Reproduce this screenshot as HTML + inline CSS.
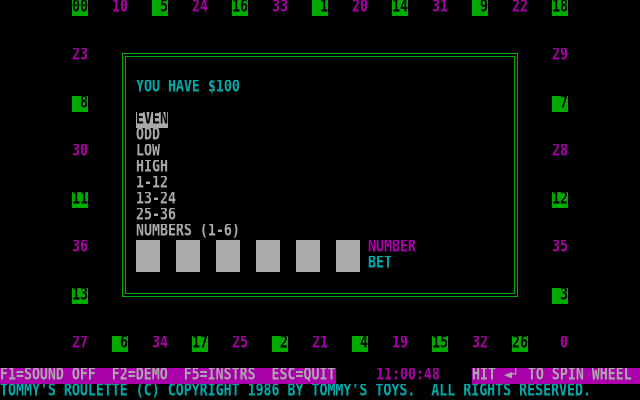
<!DOCTYPE html>
<html><head><meta charset="utf-8"><style>
html,body{margin:0;padding:0;background:#000;width:640px;height:400px;overflow:hidden;position:relative}
.t{position:absolute;height:16px;line-height:16px;font-family:"DejaVu Sans Mono","Liberation Mono",monospace;font-size:13.28px;white-space:pre;font-weight:bold;overflow:hidden}
.t i{font-style:normal;display:inline-block;transform:scaleY(1.25);transform-origin:50% 55%}
.m{color:#AA00AA}.c{color:#00AAAA}.w{color:#AAAAAA}
.g{background:#00AA00;color:#000}
.b{position:absolute;border:1px solid #00AA00}
.gb{position:absolute;background:#AAAAAA;width:24px;height:32px}
</style></head><body>
<div class="t g" style="left:72px;top:0"><i>00</i></div>
<div class="t m" style="left:112px;top:0"><i>10</i></div>
<div class="t g" style="left:152px;top:0"><i> 5</i></div>
<div class="t m" style="left:192px;top:0"><i>24</i></div>
<div class="t g" style="left:232px;top:0"><i>16</i></div>
<div class="t m" style="left:272px;top:0"><i>33</i></div>
<div class="t g" style="left:312px;top:0"><i> 1</i></div>
<div class="t m" style="left:352px;top:0"><i>20</i></div>
<div class="t g" style="left:392px;top:0"><i>14</i></div>
<div class="t m" style="left:432px;top:0"><i>31</i></div>
<div class="t g" style="left:472px;top:0"><i> 9</i></div>
<div class="t m" style="left:512px;top:0"><i>22</i></div>
<div class="t g" style="left:552px;top:0"><i>18</i></div>
<div class="t m" style="left:72px;top:48px"><i>23</i></div>
<div class="t g" style="left:72px;top:96px"><i> 8</i></div>
<div class="t m" style="left:72px;top:144px"><i>30</i></div>
<div class="t g" style="left:72px;top:192px"><i>11</i></div>
<div class="t m" style="left:72px;top:240px"><i>36</i></div>
<div class="t g" style="left:72px;top:288px"><i>13</i></div>
<div class="t m" style="left:552px;top:48px"><i>29</i></div>
<div class="t g" style="left:552px;top:96px"><i> 7</i></div>
<div class="t m" style="left:552px;top:144px"><i>28</i></div>
<div class="t g" style="left:552px;top:192px"><i>12</i></div>
<div class="t m" style="left:552px;top:240px"><i>35</i></div>
<div class="t g" style="left:552px;top:288px"><i> 3</i></div>
<div class="t m" style="left:72px;top:336px"><i>27</i></div>
<div class="t g" style="left:112px;top:336px"><i> 6</i></div>
<div class="t m" style="left:152px;top:336px"><i>34</i></div>
<div class="t g" style="left:192px;top:336px"><i>17</i></div>
<div class="t m" style="left:232px;top:336px"><i>25</i></div>
<div class="t g" style="left:272px;top:336px"><i> 2</i></div>
<div class="t m" style="left:312px;top:336px"><i>21</i></div>
<div class="t g" style="left:352px;top:336px"><i> 4</i></div>
<div class="t m" style="left:392px;top:336px"><i>19</i></div>
<div class="t g" style="left:432px;top:336px"><i>15</i></div>
<div class="t m" style="left:472px;top:336px"><i>32</i></div>
<div class="t g" style="left:512px;top:336px"><i>26</i></div>
<div class="t m" style="left:552px;top:336px"><i> 0</i></div>
<div class="b" style="left:122px;top:53px;width:394px;height:242px"></div>
<div class="b" style="left:125px;top:56px;width:388px;height:236px"></div>
<div class="t c" style="left:136px;top:80px"><i>YOU HAVE $100</i></div>
<div class="t" style="left:136px;top:112px;background:#AAAAAA;color:#000"><i>EVEN</i></div>
<div class="t w" style="left:136px;top:128px"><i>ODD</i></div>
<div class="t w" style="left:136px;top:144px"><i>LOW</i></div>
<div class="t w" style="left:136px;top:160px"><i>HIGH</i></div>
<div class="t w" style="left:136px;top:176px"><i>1-12</i></div>
<div class="t w" style="left:136px;top:192px"><i>13-24</i></div>
<div class="t w" style="left:136px;top:208px"><i>25-36</i></div>
<div class="t w" style="left:136px;top:224px"><i>NUMBERS (1-6)</i></div>
<div class="gb" style="left:136px;top:240px"></div>
<div class="gb" style="left:176px;top:240px"></div>
<div class="gb" style="left:216px;top:240px"></div>
<div class="gb" style="left:256px;top:240px"></div>
<div class="gb" style="left:296px;top:240px"></div>
<div class="gb" style="left:336px;top:240px"></div>
<div class="t m" style="left:368px;top:240px"><i>NUMBER</i></div>
<div class="t c" style="left:368px;top:256px"><i>BET</i></div>
<div class="t w" style="left:0;top:368px;background:#AA00AA;width:336px"><i>F1=SOUND OFF  F2=DEMO  F5=INSTRS  ESC=QUIT</i></div>
<div class="t m" style="left:376px;top:368px"><i>11:00:48</i></div>
<div class="t w" style="left:472px;top:368px;background:#AA00AA;width:168px"><i>HIT ◄┘ TO SPIN WHEEL</i></div>
<div class="t c" style="left:0;top:384px"><i>TOMMY'S ROULETTE (C) COPYRIGHT 1986 BY TOMMY'S TOYS.  ALL RIGHTS RESERVED.</i></div>
</body></html>
